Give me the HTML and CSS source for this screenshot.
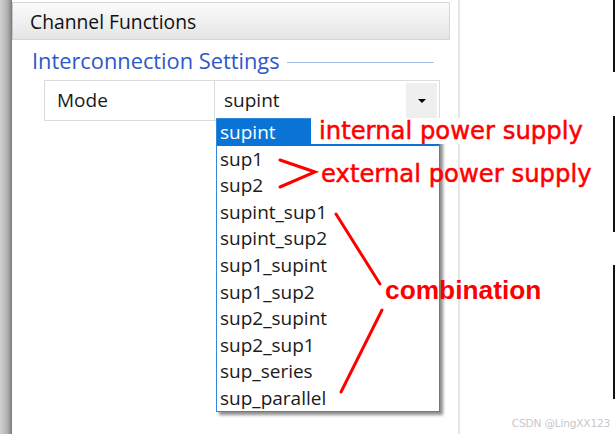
FILE: index.html
```html
<!DOCTYPE html>
<html>
<head>
<meta charset="utf-8">
<link rel="stylesheet" href="styles.css">
</head>
<body>
<div class="app">
  <div class="sidebar"></div>
  <div class="panel">
    <div class="header">Channel Functions</div>
    <div class="group-title">
      <span class="group-text">Interconnection Settings</span>
      <span class="group-line"></span>
    </div>
    <div class="prop-row">
      <div class="prop-label">Mode</div>
      <div class="prop-value">
        <span class="value-text">supint</span>
        <span class="drop-btn"><span class="caret"></span></span>
      </div>
    </div>
  </div>
  <div class="right">
    <div class="mark mark1"></div>
    <div class="mark mark2"></div>
    <div class="mark mark3"></div>
    <div class="watermark">CSDN @LingXX123</div>
  </div>

  <ul class="popup">
    <li class="item selected">supint</li>
    <li class="item">sup1</li>
    <li class="item">sup2</li>
    <li class="item">supint_sup1</li>
    <li class="item">supint_sup2</li>
    <li class="item">sup1_supint</li>
    <li class="item">sup1_sup2</li>
    <li class="item">sup2_supint</li>
    <li class="item">sup2_sup1</li>
    <li class="item">sup_series</li>
    <li class="item">sup_parallel</li>
  </ul>

  <div class="note note-internal">internal power supply</div>
  <div class="note note-external">external power supply</div>
  <div class="note note-combo">combination</div>
  <svg class="strokes" width="616" height="434" viewBox="0 0 616 434">
    <polyline points="280,160 315,172 280,187" />
    <line x1="336" y1="214" x2="380" y2="284" />
    <line x1="382" y1="310" x2="341" y2="392" />
  </svg>
</div>
</body>
</html>
```
FILE: styles.css
```css
* { box-sizing: border-box; }
html, body { margin: 0; padding: 0; background: #fff; }
body { font-family: "Open Sans", "Noto Sans", sans-serif; color: #1a1a1a; }

.app {
  position: relative;
  display: flex;
  width: 616px;
  height: 434px;
  overflow: hidden;
}

.sidebar {
  width: 12px;
  flex: none;
  background: linear-gradient(to right, #d0d0d0 0%, #b8b8b8 50%, #9a9a9a 80%, #777 100%);
}

.panel {
  width: 448px;
  flex: none;
  border-right: 2px solid #e6e6e6;
  padding-top: 2px;
}

.header {
  width: 438px;
  height: 38px;
  border: 1px solid #d6d6d6;
  border-left-color: #c8c8c8;
  background: linear-gradient(#fbfbfb, #e5e5e5);
  font-size: 19.3px;
  line-height: 37px;
  padding-left: 17px;
  color: #111;
}

.group-title {
  display: flex;
  align-items: center;
  margin: 8px 0 0 20px;
  height: 26px;
  width: 402px;
}
.group-text {
  font-size: 21.8px;
  color: #2e58c8;
  white-space: nowrap;
  line-height: 26px;
}
.group-line {
  flex: 1;
  height: 1px;
  background: #a9bfe6;
  margin-left: 7px;
  margin-top: 2px;
}

.prop-row {
  display: flex;
  margin: 6px 0 0 32px;
  width: 396px;
  height: 41px;
  border: 1px solid #dcdcdc;
  font-size: 19px;
}
.prop-label {
  width: 170px;
  border-right: 1px solid #dcdcdc;
  padding-left: 12px;
  line-height: 38px;
}
.prop-value {
  flex: 1;
  display: flex;
  align-items: center;
  justify-content: space-between;
  padding: 2px 2px 2px 9px;
}
.value-text { line-height: 34px; margin-top: -2px; }
.drop-btn {
  width: 31px;
  height: 35px;
  background: #efefef;
  display: flex;
  align-items: center;
  justify-content: center;
}
.caret {
  width: 0; height: 0;
  border-left: 4px solid transparent;
  border-right: 4px solid transparent;
  border-top: 4px solid #000;
  margin-top: 1px;
}

.right {
  flex: 1;
  position: relative;
  display: flex;
  flex-direction: column;
  align-items: flex-end;
  padding-right: 1px;
}
.mark { width: 2px; background: #111; flex: none; }
.mark1 { height: 72px; }
.mark2 { height: 116px; margin-top: 44px; }
.mark3 { height: 134px; margin-top: 33px; }
.watermark {
  margin-top: auto;
  margin-bottom: 5px;
  margin-right: 5px;
  font-family: "DejaVu Sans", sans-serif;
  font-size: 10.6px;
  letter-spacing: -0.2px;
  color: #c8c8c8;
  white-space: nowrap;
}

.popup {
  position: absolute;
  left: 216px;
  top: 118px;
  width: 224px;
  height: 294px;
  margin: 0;
  padding: 0;
  list-style: none;
  background: #fff;
  border: 1px solid #2f88dd;
  box-shadow: 3px 3px 3px rgba(0,0,0,0.45);
  font-size: 19px;
}
.item {
  height: 26.6px;
  line-height: 26.6px;
  padding-left: 3px;
  color: #1a1a1a;
  white-space: nowrap;
}
.item.selected {
  background: #0a74d6;
  color: #fff;
}

.note {
  position: absolute;
  color: #ff0000;
  font-family: "DejaVu Sans", sans-serif;
  font-size: 24.3px;
  -webkit-text-stroke: 0.5px #ff0000;
  white-space: nowrap;
  line-height: 26px;
}
.note-internal {
  left: 311px;
  top: 118px;
  padding: 0 4px 0 8px;
  background: #fff;
}
.note-external { left: 321px; top: 161px; }
.note-combo {
  left: 385px;
  top: 277px;
  font-family: "Liberation Sans", sans-serif;
  font-weight: bold;
  font-size: 26.3px;
  -webkit-text-stroke: 0;
}

.strokes {
  position: absolute;
  left: 0; top: 0;
  pointer-events: none;
}
.strokes polyline, .strokes line {
  fill: none;
  stroke: #ff0000;
  stroke-width: 3;
  stroke-linecap: round;
  stroke-linejoin: miter;
}
```
